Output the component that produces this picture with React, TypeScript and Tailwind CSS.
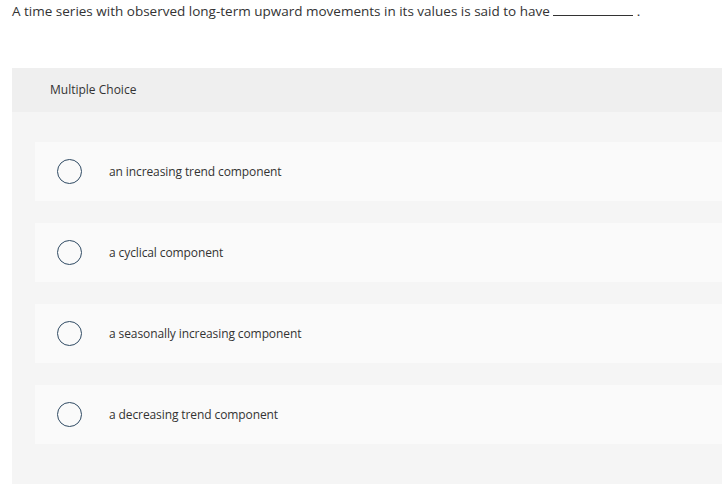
const options = [
  "an increasing trend component",
  "a cyclical component",
  "a seasonally increasing component",
  "a decreasing trend component",
];

export default function App() {
  return (
    <div className="min-h-[487px] w-[722px] bg-white font-['Open_Sans',sans-serif] text-[#333]">
      <p className="pl-[12px] pt-[3px] text-[13.5px] leading-[17px]">
        A time series with observed long-term upward movements in its values is said to have{" "}
        <span className="inline-block w-[80px] border-b border-[#333] align-baseline" /> .
      </p>

      <div className="ml-[12px] mt-[48px] bg-[#f5f5f5] pb-[40px]">
        {/* Header */}
        <div className="flex h-[44px] items-center bg-[#efefef] pl-[38px] text-[12px]">
          Multiple Choice
        </div>

        {/* Options */}
        <div className="flex flex-col gap-[22px] pl-[23px] pt-[30px]">
          {options.map((o) => (
            <div key={o} className="flex h-[59px] items-center bg-[#fafafa]">
              <span className="ml-[22px] h-[25px] w-[25px] rounded-full border-[1.5px] border-[#2f4a63]" />
              <span className="ml-[27px] text-[12px] tracking-[-0.1px]">{o}</span>
            </div>
          ))}
        </div>
      </div>
    </div>
  );
}
